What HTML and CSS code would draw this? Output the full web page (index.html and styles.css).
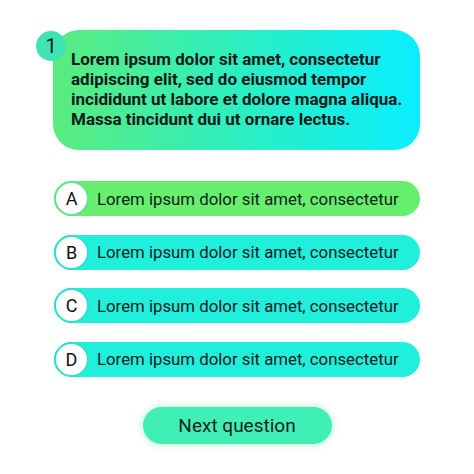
FILE: index.html
```html
<!DOCTYPE html>
<html>
<head>
<meta charset="utf-8">
<link rel="stylesheet" href="styles.css">
</head>
<body>
<div class="quiz">
  <div class="question">
    <div class="badge">1</div>
    <p class="qtext">Lorem ipsum dolor sit amet, consectetur adipiscing elit, sed do eiusmod tempor incididunt ut labore et dolore magna aliqua. Massa tincidunt dui ut ornare lectus.</p>
  </div>
  <div class="options">
    <div class="option selected"><span class="letter">A</span><span class="otext">Lorem ipsum dolor sit amet, consectetur</span></div>
    <div class="option"><span class="letter">B</span><span class="otext">Lorem ipsum dolor sit amet, consectetur</span></div>
    <div class="option"><span class="letter">C</span><span class="otext">Lorem ipsum dolor sit amet, consectetur</span></div>
    <div class="option"><span class="letter">D</span><span class="otext">Lorem ipsum dolor sit amet, consectetur</span></div>
  </div>
  <div class="actions"><button class="next">Next question</button></div>
</div>
</body>
</html>
```
FILE: styles.css
```css
* { box-sizing: border-box; }
html, body { margin: 0; padding: 0; background: #ffffff; }
body { font-family: Roboto, "Liberation Sans", sans-serif; color: #111; width: 474px; height: 474px; overflow: hidden; }
.quiz { padding: 30px 54px 0 53px; }
.question {
  position: relative;
  border-radius: 26px;
  background: linear-gradient(90deg, #5aec7e 0%, #2cefc0 50%, #0aeeff 100%);
  padding: 19px 12px 21px 18px;
  min-height: 120px;
}
.badge {
  position: absolute;
  left: -17px;
  top: 1px;
  width: 30px;
  height: 30px;
  border-radius: 50%;
  background: #3fe3b4;
  color: #101a18;
  font-size: 20px;
  line-height: 30px;
  text-align: center;
}
.qtext {
  margin: 0;
  font-size: 17px;
  font-weight: 700;
  line-height: 20px;
  color: #0e1a1a;
}
.options { display: flex; flex-direction: column; gap: 18.5px; margin-top: 31px; padding-left: 1px; }
.option {
  display: flex;
  align-items: center;
  height: 35px;
  border-radius: 18px;
  background: #20efdc;
}
.option.selected { background: #66ef6c; }
.letter {
  width: 35px;
  height: 35px;
  border-radius: 50%;
  background: #fff;
  border: 2px solid #2fe1c9;
  display: flex;
  align-items: center;
  justify-content: center;
  font-size: 18px;
  color: #111;
  flex: none;
}
.option.selected .letter { border-color: #5de587; }
.otext { margin-left: 8px; font-size: 16.8px; color: #112020; }
.actions { display: flex; justify-content: center; margin-top: 30px; padding-left: 1px; }
.next {
  width: 189px;
  height: 37px;
  border: none;
  border-radius: 19px;
  background: #40efb6;
  box-shadow: 0 0 6px 2px rgba(140, 245, 170, 0.45);
  font-family: Roboto, "Liberation Sans", sans-serif;
  font-size: 19px;
  color: #0f1f1c;
}
```
